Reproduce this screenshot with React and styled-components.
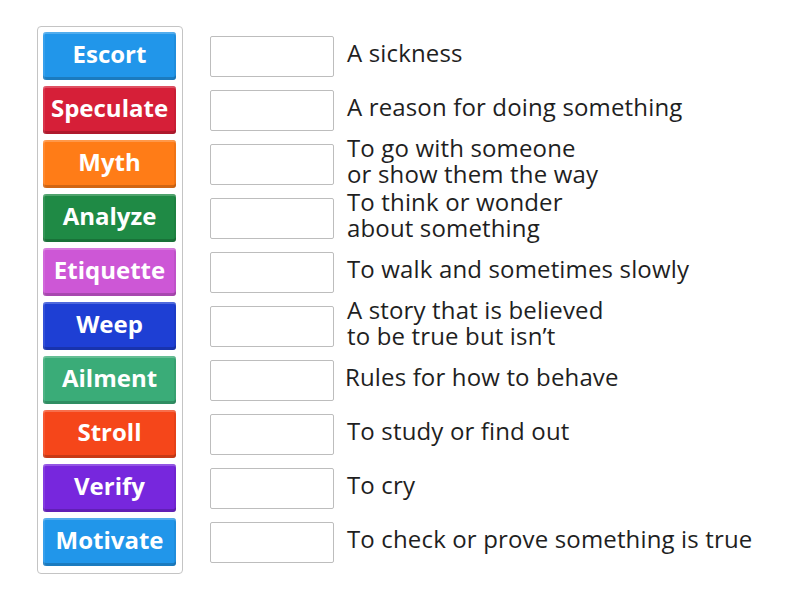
import React from 'react'
import styled, { createGlobalStyle } from 'styled-components'

const GlobalStyle = createGlobalStyle`
  body {
    margin: 0;
    background: #fff;
    font-family: "Open Sans", "Liberation Sans", sans-serif;
  }
`

const tiles = [
  { label: 'Escort', color: '#2196ea' },
  { label: 'Speculate', color: '#d61f38' },
  { label: 'Myth', color: '#ff7c17' },
  { label: 'Analyze', color: '#1f8a45' },
  { label: 'Etiquette', color: '#cd57d6' },
  { label: 'Weep', color: '#1e3fd4' },
  { label: 'Ailment', color: '#3aac78' },
  { label: 'Stroll', color: '#f5461a' },
  { label: 'Verify', color: '#7727dd' },
  { label: 'Motivate', color: '#2196ea' },
]

const clues = [
  ['A sickness'],
  ['A reason for doing something'],
  ['To go with someone', 'or show them the way'],
  ['To think or wonder', 'about something'],
  ['To walk and sometimes slowly'],
  ['A story that is believed', 'to be true but isn\u2019t'],
  ['Rules for how to behave'],
  ['To study or find out'],
  ['To cry'],
  ['To check or prove something is true'],
]

const Page = styled.div`
  display: flex;
  align-items: flex-start;
  padding: 26px 0 0 37px;
`

const TileBank = styled.div`
  display: flex;
  flex-direction: column;
  gap: 6px;
  padding: 5px 6px 7px 5px;
  border: 1px solid #c4c4c4;
  border-radius: 4px;
`

const Tile = styled.div`
  width: 133px;
  height: 48px;
  box-sizing: border-box;
  display: flex;
  align-items: center;
  justify-content: center;
  border-radius: 3px;
  background: ${p => p.$color};
  box-shadow:
    inset 0 2px 0 rgba(255, 255, 255, 0.22),
    inset 2px 0 0 rgba(255, 255, 255, 0.1),
    inset -2px 0 0 rgba(0, 0, 0, 0.06),
    inset 0 -3px 0 rgba(0, 0, 0, 0.18);
  color: #fff;
  font-size: 24px;
  font-weight: 700;
  padding-bottom: 5px;
`

const Answers = styled.div`
  display: flex;
  flex-direction: column;
  margin-left: 27px;
  padding-top: 3px;
`

const Row = styled.div`
  height: 54px;
  display: flex;
  align-items: center;
`

const Slot = styled.div`
  width: 124px;
  height: 41px;
  box-sizing: border-box;
  border: 1px solid #bdbdbd;
  border-radius: 2px;
  background: #fff;
  flex-shrink: 0;
`

const Clue = styled.div`
  margin-left: ${p => (p.$tight ? '11px' : '13px')};
  padding-bottom: 6px;
  color: #1f1f1f;
  font-size: 24px;
  line-height: 26.5px;
  letter-spacing: 0.15px;
  white-space: nowrap;
`

export default function App() {
  return (
    <>
      <GlobalStyle />
      <Page>
        <TileBank>
          {tiles.map(t => (
            <Tile key={t.label} $color={t.color}>{t.label}</Tile>
          ))}
        </TileBank>
        <Answers>
          {clues.map((lines, i) => (
            <Row key={i}>
              <Slot />
              <Clue $tight={i === 6}>
                {lines.map((l, j) => <div key={j}>{l}</div>)}
              </Clue>
            </Row>
          ))}
        </Answers>
      </Page>
    </>
  )
}
